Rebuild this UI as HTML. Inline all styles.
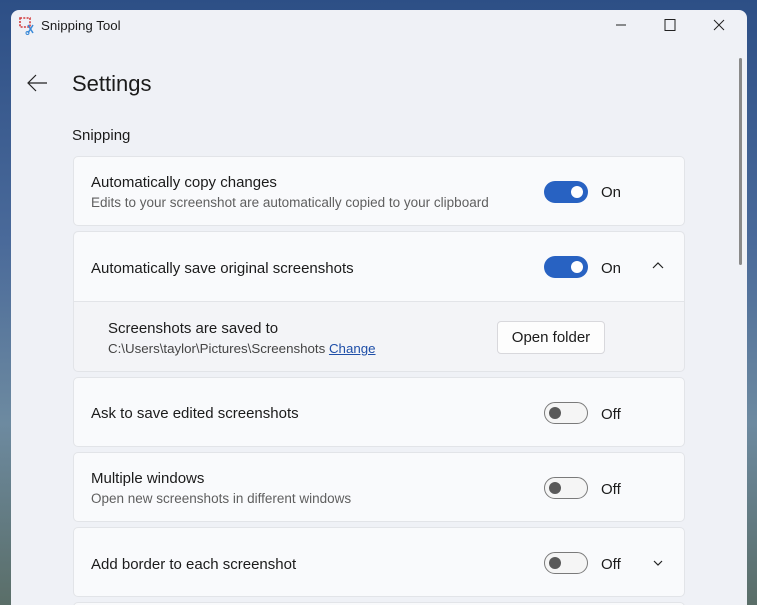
<!DOCTYPE html>
<html><head><style>
*{margin:0;padding:0;box-sizing:border-box}
html,body{width:757px;height:605px;overflow:hidden}
body{position:relative;font-family:"Liberation Sans",sans-serif;color:#1b1b1b;
background:linear-gradient(180deg,#2d4f86 0,#4a6a9a 40%,#6d8aa0 70%,#5a6e68 100%)}
.win{position:absolute;left:11px;top:10px;width:736px;height:595px;background:#eff1f6;border-radius:8px 8px 0 0;overflow:hidden}
.t{position:absolute;white-space:nowrap}
.card{position:absolute;left:62px;width:612px;background:#f9fafc;border:1px solid #e2e4e8;border-radius:5px}
.tg{position:absolute;width:44px;height:22px;border-radius:11px}
.on{background:#2862c2}
.on::after{content:"";position:absolute;right:5px;top:5px;width:12px;height:12px;border-radius:50%;background:#fff}
.off{border:1px solid #7a7a7a;background:#f5f5f5}
.off::after{content:"";position:absolute;left:4px;top:4px;width:12px;height:12px;border-radius:50%;background:#5a5a5a}
.m{font-size:15px}
.s{font-size:13.5px;color:#5f5f5f}
</style></head><body>
<div class="win">
<svg class="t" style="left:8px;top:7px" width="18" height="18" viewBox="0 0 18 18"><rect x="1" y="1" width="10" height="9" fill="none" stroke="#d23b3b" stroke-width="1.6" stroke-dasharray="2 1.3"/><path d="M9 8 L14 16 M14 8 L9 16" stroke="#3a8ad8" stroke-width="1.5"/><circle cx="8.5" cy="16" r="1.5" fill="none" stroke="#3a8ad8"/></svg>
<div class="t" style="left:30px;top:8px;font-size:13.3px">Snipping Tool</div>
<svg class="t" style="left:604px;top:8px" width="120" height="14"><path d="M1 7H11" stroke="#222"/><rect x="50" y="1.5" width="10" height="11" fill="none" stroke="#222"/><path d="M99 2L109 12M109 2L99 12" stroke="#222"/></svg>
<svg class="t" style="left:16px;top:64px" width="22" height="18"><path d="M20 9H2M9 1L1 9L9 17" fill="none" stroke="#222" stroke-width="1.2"/></svg>
<div class="t" style="left:61px;top:61px;font-size:22px">Settings</div>
<div class="t" style="left:61px;top:117px;font-size:15px">Snipping</div>
<div style="position:absolute;left:728px;top:48px;width:3px;height:207px;background:#8a8a8a;border-radius:2px"></div>

<div class="card" style="top:146px;height:70px">
<div class="t m" style="left:17px;top:17px">Automatically copy changes</div>
<div class="t s" style="left:17px;top:38px">Edits to your screenshot are automatically copied to your clipboard</div>
<div class="tg on" style="left:470px;top:24px"></div><div class="t m" style="left:527px;top:27px">On</div>
</div>
<div class="card" style="top:221px;height:141px;background:#f3f4f7">
<div style="position:absolute;left:0;top:0;width:610px;height:70px;background:#f9fafc;border-bottom:1px solid #e2e4e8;border-radius:5px 5px 0 0"></div>
<div class="t m" style="left:17px;top:28px">Automatically save original screenshots</div>
<div class="tg on" style="left:470px;top:24px"></div><div class="t m" style="left:527px;top:28px">On</div>
<svg class="t" style="left:578px;top:30px" width="12" height="8"><path d="M1 6L6 1L11 6" fill="none" stroke="#222" stroke-width="1.2"/></svg>
<div class="t m" style="left:34px;top:88px">Screenshots are saved to</div>
<div class="t s" style="left:34px;top:109px;color:#444;font-size:13.3px">C:\Users\taylor\Pictures\Screenshots <span style="color:#1f4fa8;text-decoration:underline">Change</span></div>
<div style="position:absolute;left:423px;top:89px;width:108px;height:33px;background:#fdfdfd;border:1px solid #d8d8dc;border-radius:4px;font-size:15px;text-align:center;line-height:31px">Open folder</div>
</div>
<div class="card" style="top:367px;height:70px">
<div class="t m" style="left:17px;top:27px">Ask to save edited screenshots</div>
<div class="tg off" style="left:470px;top:24px"></div><div class="t m" style="left:527px;top:28px">Off</div>
</div>
<div class="card" style="top:442px;height:70px">
<div class="t m" style="left:17px;top:17px">Multiple windows</div>
<div class="t s" style="left:17px;top:38px">Open new screenshots in different windows</div>
<div class="tg off" style="left:470px;top:24px"></div><div class="t m" style="left:527px;top:28px">Off</div>
</div>
<div class="card" style="top:517px;height:70px">
<div class="t m" style="left:17px;top:28px">Add border to each screenshot</div>
<div class="tg off" style="left:470px;top:24px"></div><div class="t m" style="left:527px;top:28px">Off</div>
<svg class="t" style="left:578px;top:31px" width="12" height="8"><path d="M2 2L6 6L10 2" fill="none" stroke="#222" stroke-width="1.2"/></svg>
</div>
<div class="card" style="top:592px;height:30px"></div>
</div>
</body></html>
